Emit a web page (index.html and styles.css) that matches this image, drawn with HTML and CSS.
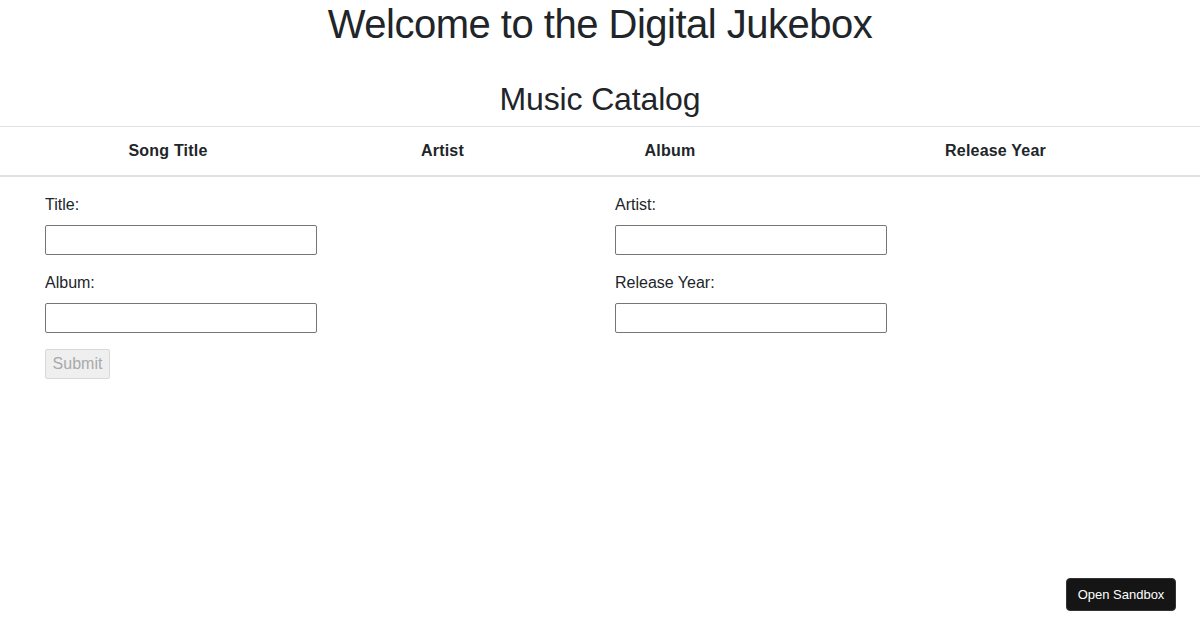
FILE: index.html
```html
<!DOCTYPE html>
<html lang="en">
<head>
<meta charset="utf-8">
<title>Digital Jukebox</title>
<link rel="stylesheet" href="styles.css">
</head>
<body>
  <h1 class="title">Welcome to the Digital Jukebox</h1>
  <section class="catalog">
    <h2 class="subtitle">Music Catalog</h2>
    <table class="songs">
      <colgroup>
        <col class="c-title">
        <col class="c-artist">
        <col class="c-album">
        <col class="c-year">
      </colgroup>
      <thead>
        <tr>
          <th>Song Title</th>
          <th>Artist</th>
          <th>Album</th>
          <th>Release Year</th>
        </tr>
      </thead>
      <tbody></tbody>
    </table>
  </section>
  <form class="container">
    <div class="row">
      <div class="col">
        <div class="group">
          <label class="label" for="title">Title:</label>
          <input class="field" id="title" type="text">
        </div>
        <div class="group">
          <label class="label" for="album">Album:</label>
          <input class="field" id="album" type="text">
        </div>
        <button class="submit" type="submit" disabled>Submit</button>
      </div>
      <div class="col">
        <div class="group">
          <label class="label" for="artist">Artist:</label>
          <input class="field" id="artist" type="text">
        </div>
        <div class="group">
          <label class="label" for="year">Release Year:</label>
          <input class="field" id="year" type="text">
        </div>
      </div>
    </div>
  </form>
  <button class="sandbox" type="button">Open Sandbox</button>
</body>
</html>
```

FILE: styles.css
```css
* { box-sizing: border-box; }
html, body { margin: 0; padding: 0; }
body {
  font-family: "Liberation Sans", Arial, sans-serif;
  font-size: 16px;
  line-height: 1.5;
  color: #212529;
  background: #fff;
}
.title {
  margin: 0 0 8px;
  font-size: 40px;
  font-weight: 400;
  line-height: 1.2;
  letter-spacing: -0.5px;
  text-align: center;
}
.catalog { margin-top: 32px; }
.subtitle {
  margin: 0 0 8px;
  font-size: 32px;
  font-weight: 400;
  line-height: 1.2;
  letter-spacing: -0.15px;
  text-align: center;
}
.songs {
  width: 100%;
  table-layout: fixed;
  border-collapse: collapse;
  margin-bottom: 16px;
}
.c-title { width: 336px; }
.c-artist { width: 213px; }
.c-album { width: 242px; }
.c-year { width: 409px; }
.songs th {
  padding: 12px 0;
  text-align: center;
  font-weight: 700;
  letter-spacing: 0.2px;
  border-top: 1px solid #dee2e6;
  border-bottom: 2px solid #dee2e6;
  vertical-align: bottom;
}
.container {
  width: 1140px;
  margin: 0 auto;
  padding: 0 15px;
}
.row { display: flex; margin: 0 -15px; }
.col { width: 50%; padding: 0 15px; }
.group { margin-bottom: 16px; }
.label { display: block; margin-bottom: 8px; }
.field {
  display: block;
  width: 272px;
  height: 30px;
  margin: 0;
  padding: 1px 2px;
  border: 1px solid #767676;
  border-radius: 2px;
  font: inherit;
  background: #fff;
}
.submit {
  display: block;
  height: 30px;
  width: 65px;
  padding: 0;
  font-family: inherit;
  font-size: 16px;
  color: #a9a9a9;
  background: #efefef;
  border: 1px solid #d8d8d8;
  border-radius: 2px;
}
.sandbox {
  position: fixed;
  right: 24px;
  bottom: 19px;
  width: 110px;
  height: 33px;
  padding: 0;
  border: 1px solid #333;
  border-radius: 4px;
  background: #151515;
  color: #fff;
  font-family: "Liberation Sans", Arial, sans-serif;
  font-size: 13px;
}
```
